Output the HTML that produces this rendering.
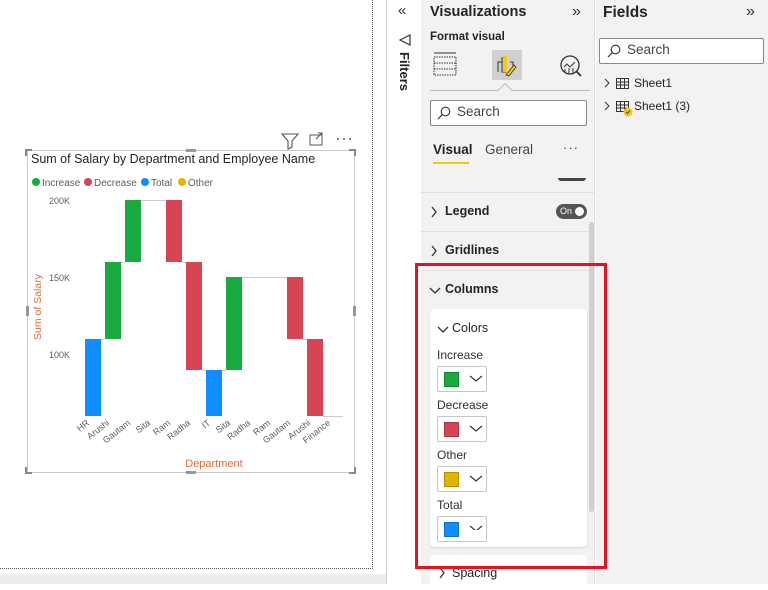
<!DOCTYPE html>
<html><head><meta charset="utf-8"><style>
*{margin:0;padding:0;box-sizing:border-box}
body{width:768px;height:584px;overflow:hidden;background:#fff;font-family:"Segoe UI","Liberation Sans",sans-serif;position:relative;color:#252423}
.abs{position:absolute}
.pane{background:#f3f2f1}
.sw{position:absolute;left:437px;width:50px;height:26px;background:#fff;border:1px solid #c8c6c4;border-radius:2px}
.sw i{position:absolute;left:6px;top:5px;width:15px;height:15px;border:1px solid rgba(0,0,0,.2)}
.lbl{position:absolute;left:437px;font-size:12px;color:#323130}
.sec{position:absolute;left:445px;font-size:12.5px;font-weight:600;color:#252423}
</style></head><body>
<div class="abs" style="left:0;top:0;width:373px;height:569px;border-right:1px dotted #555;border-bottom:1px dotted #555"></div>
<div class="abs" style="left:0;top:574px;width:386px;height:10px;background:#eeeded"></div>
<svg class="abs" style="left:0;top:0" width="386" height="574" font-family="Liberation Sans, sans-serif">
 <path d="M282 134h16l-6 7v6l-4 2v-8z" fill="none" stroke="#555" stroke-width="1.1"/>
 <rect x="310" y="135" width="12" height="10" fill="none" stroke="#555"/>
 <path d="M316 139l6-6M318 133h4v4" fill="none" stroke="#555"/>
 <circle cx="338" cy="139" r="1" fill="#555"/><circle cx="344" cy="139" r="1" fill="#555"/><circle cx="350" cy="139" r="1" fill="#555"/>
 <rect x="27.5" y="150.5" width="327" height="322" fill="none" stroke="#c8c8c8"/>
 <path d="M26 156v-6h6M349 150h6v6M26 467v6h6M349 473h6v-6" stroke="#888" stroke-width="2" fill="none"/>
 <rect x="186" y="149" width="10" height="3" fill="#999"/><rect x="186" y="471" width="10" height="3" fill="#999"/>
 <rect x="26" y="306" width="3" height="10" fill="#999"/><rect x="353" y="306" width="3" height="10" fill="#999"/>
 <text x="31" y="163" font-size="12.5" fill="#252423">Sum of Salary by Department and Employee Name</text>
 <circle cx="36" cy="182" r="4" fill="#1aab40"/><text x="42" y="186" font-size="10" fill="#605e5c">Increase</text>
 <circle cx="88" cy="182" r="4" fill="#d64554"/><text x="94" y="186" font-size="10" fill="#605e5c">Decrease</text>
 <circle cx="145" cy="182" r="4" fill="#118dff"/><text x="151" y="186" font-size="10" fill="#605e5c">Total</text>
 <circle cx="182" cy="182" r="4" fill="#e0b400"/><text x="188" y="186" font-size="10" fill="#605e5c">Other</text>
 <g font-size="9" fill="#605e5c" text-anchor="end"><text x="70" y="204">200K</text><text x="70" y="281">150K</text><text x="70" y="358">100K</text></g>
 <text transform="translate(41,307) rotate(-90)" text-anchor="middle" font-size="10.5" fill="#e66c37">Sum of Salary</text>
 <g stroke="#ccc" stroke-width="1"><path d="M141 200.5h25M242 277.5h45M323 416.5h20M101 339.5h4M121 262.5h4M182 262.5h4M202 370.5h4M222 370.5h4M303 339.5h4"/></g>
 <rect x="85" y="339" width="16" height="77" fill="#118dff"/>
 <rect x="105" y="262" width="16" height="77" fill="#1aab40"/>
 <rect x="125" y="200" width="16" height="62" fill="#1aab40"/>
 <rect x="166" y="200" width="16" height="62" fill="#d64554"/>
 <rect x="186" y="262" width="16" height="108" fill="#d64554"/>
 <rect x="206" y="370" width="16" height="46" fill="#118dff"/>
 <rect x="226" y="277" width="16" height="93" fill="#1aab40"/>
 <rect x="287" y="277" width="16" height="62" fill="#d64554"/>
 <rect x="307" y="339" width="16" height="77" fill="#d64554"/>
 <g font-size="9" fill="#605e5c" text-anchor="end">
  <text transform="translate(90,424) rotate(-38)">HR</text>
  <text transform="translate(110,424) rotate(-38)">Arushi</text>
  <text transform="translate(131,424) rotate(-38)">Gautam</text>
  <text transform="translate(151,424) rotate(-38)">Sita</text>
  <text transform="translate(171,424) rotate(-38)">Ram</text>
  <text transform="translate(191,424) rotate(-38)">Radha</text>
  <text transform="translate(211,424) rotate(-38)">IT</text>
  <text transform="translate(231,424) rotate(-38)">Sita</text>
  <text transform="translate(251,424) rotate(-38)">Radha</text>
  <text transform="translate(271,424) rotate(-38)">Ram</text>
  <text transform="translate(291,424) rotate(-38)">Gautam</text>
  <text transform="translate(311,424) rotate(-38)">Arushi</text>
  <text transform="translate(331,424) rotate(-38)">Finance</text>
 </g>
 <text x="214" y="467" text-anchor="middle" font-size="11" fill="#e66c37">Department</text>
</svg>
<div class="abs" style="left:386px;top:0;width:35px;height:584px;border-left:1px solid #d0d0d0;background:#fff"></div>
<div class="abs" style="left:398px;top:2px;font-size:15px;color:#333">«</div>
<svg class="abs" style="left:397px;top:34px" width="16" height="12"><path d="M3 6l10-5v10z" fill="none" stroke="#333" stroke-width="1.2"/></svg>
<div class="abs" style="left:396px;top:52px;font-size:13px;font-weight:700;transform-origin:0 0;transform:translate(16px,0) rotate(90deg);color:#252423">Filters</div>
<div class="abs pane" style="left:421px;top:0;width:174px;height:584px;border-right:1px solid #e1dfdd"></div>
<div class="abs" style="left:430px;top:4px;font-size:14.5px;font-weight:600">Visualizations</div>
<div class="abs" style="left:572px;top:3px;font-size:16px;color:#333">»</div>
<div class="abs" style="left:430px;top:31px;font-size:11.5px;font-weight:600">Format visual</div>
<svg class="abs" style="left:430px;top:48px" width="160" height="44">
 <path d="M4 5h22" stroke="#333"/><rect x="4" y="9" width="22" height="18" fill="none" stroke="#333" stroke-dasharray="1.5 1"/><path d="M4 15h22M4 21h22" stroke="#333" stroke-dasharray="1.5 1"/>
 <rect x="62" y="2" width="30" height="30" fill="#d2d0ce"/>
 <path d="M68 24v-10h4M72 10h4v14h-4zM80 14h3v5" fill="none" stroke="#333"/><rect x="73" y="8" width="4" height="16" fill="#f2c811"/>
 <path d="M76 27l8-10 2 2-7 9z" fill="#f2c811" stroke="#333" stroke-width=".8"/>
 <circle cx="140" cy="17" r="9" fill="none" stroke="#333" stroke-width="1.3"/><path d="M146 23l5 5" stroke="#333" stroke-width="1.8"/><path d="M134 19l3-3 3 3 5-5M135 21v4M139 20v6M143 20v6" stroke="#333" fill="none"/>
 <path d="M0 42.5h68l7-7 7 7h78" fill="none" stroke="#bbb"/>
</svg>
<div class="abs" style="left:430px;top:100px;width:157px;height:26px;background:#fff;border:1px solid #8a8886;border-radius:2px"></div>
<svg class="abs" style="left:437px;top:106px" width="14" height="14"><circle cx="8.5" cy="5.5" r="4.3" fill="none" stroke="#333" stroke-width="1.1"/><path d="M5.5 8.5l-4.5 4.5" stroke="#333" stroke-width="1.2"/></svg>
<div class="abs" style="left:457px;top:104px;font-size:13.5px;color:#444">Search</div>
<div class="abs" style="left:433px;top:142px;font-size:13.5px;font-weight:600">Visual</div>
<div class="abs" style="left:433px;top:162px;width:36px;height:2px;background:#f2c811"></div>
<div class="abs" style="left:485px;top:142px;font-size:13.5px;color:#444">General</div>
<div class="abs" style="left:563px;top:140px;font-size:13px;color:#444;letter-spacing:1px">···</div>
<div class="abs" style="left:558px;top:178px;width:28px;height:3px;background:#444;border-radius:0 0 3px 3px"></div>
<div class="abs" style="left:421px;top:192px;width:174px;height:1px;background:#e1dfdd"></div>
<div class="sec" style="top:204px">Legend</div>
<div class="abs" style="left:556px;top:204px;width:31px;height:15px;background:#555;border-radius:8px;color:#fff;font-size:9px;padding:2px 0 0 4px">On<span style="position:absolute;right:3px;top:3px;width:9px;height:9px;border-radius:50%;background:#fff"></span></div>
<div class="abs" style="left:421px;top:231px;width:170px;height:1px;background:#e1dfdd"></div>
<div class="sec" style="top:243px">Gridlines</div>
<div class="abs" style="left:421px;top:270px;width:170px;height:1px;background:#e1dfdd"></div>
<div class="abs" style="left:589px;top:222px;width:5px;height:290px;background:#d2d0ce;border-radius:3px"></div>
<div class="sec" style="top:282px">Columns</div>
<div class="abs" style="left:430px;top:309px;width:157px;height:238px;background:#fff;border-radius:4px;box-shadow:0 1px 2px rgba(0,0,0,.12)"></div>
<div class="sec" style="left:452px;top:321px;font-weight:400;color:#252423">Colors</div>
<div class="lbl" style="top:348px">Increase</div>
<div class="sw" style="top:366px"><i style="background:#1aab40"></i></div>
<div class="lbl" style="top:398px">Decrease</div>
<div class="sw" style="top:416px"><i style="background:#d64554"></i></div>
<div class="lbl" style="top:448px">Other</div>
<div class="sw" style="top:466px"><i style="background:#e0b400"></i></div>
<div class="lbl" style="top:498px">Total</div>
<div class="sw" style="top:516px"><i style="background:#118dff"></i></div>
<svg class="abs" style="left:468px;top:370px" width="16" height="160" fill="none" stroke="#333" stroke-width="1.2"><path d="M2 6l6 5 6-5M2 56l6 5 6-5M2 106l6 5 6-5M2 156l6 5 6-5"/></svg>
<div class="abs" style="left:430px;top:555px;width:157px;height:30px;background:#fff;border-radius:4px"></div>
<div class="sec" style="left:452px;top:566px;font-weight:400">Spacing</div>
<svg class="abs" style="left:428px;top:200px;z-index:3" width="30" height="390" fill="none" stroke="#333" stroke-width="1.3">
 <path d="M4 7l4 5-4 5M4 46l4 5-4 5M2 88l5 5 5-5M10 127l5 5 5-5M12 368l4 5-4 5"/>
</svg>
<div class="abs pane" style="left:596px;top:0;width:172px;height:584px"></div>
<div class="abs" style="left:603px;top:4px;font-size:15.5px;font-weight:600">Fields</div>
<div class="abs" style="left:746px;top:3px;font-size:16px;color:#333">»</div>
<div class="abs" style="left:599px;top:38px;width:165px;height:26px;background:#fff;border:1px solid #8a8886;border-radius:2px"></div>
<svg class="abs" style="left:607px;top:44px" width="14" height="14"><circle cx="8.5" cy="5.5" r="4.3" fill="none" stroke="#333" stroke-width="1.1"/><path d="M5.5 8.5l-4.5 4.5" stroke="#333" stroke-width="1.2"/></svg>
<div class="abs" style="left:627px;top:42px;font-size:13.5px;color:#444">Search</div>
<svg class="abs" style="left:604px;top:77px" width="30" height="42" fill="none" stroke="#333">
 <path d="M1 2l4 4-4 4M1 25l4 4-4 4" stroke-width="1"/>
 <rect x="12.5" y="1.5" width="12" height="10"/><path d="M12.5 5h12M12.5 8h12M16.5 1.5v10M20.5 1.5v10"/>
 <rect x="12.5" y="24.5" width="12" height="10"/><path d="M12.5 28h12M12.5 31h12M16.5 24.5v10M20.5 24.5v10"/>
 <circle cx="24" cy="35" r="4.5" fill="#f2c811" stroke="none"/><path d="M22 35l1.5 1.5 2.5-3" stroke-width=".9"/>
</svg>
<div class="abs" style="left:634px;top:76px;font-size:12px">Sheet1</div>
<div class="abs" style="left:634px;top:99px;font-size:12px">Sheet1 (3)</div>
<div class="abs" style="left:415px;top:263px;width:192px;height:306px;border:3px solid #e81123;z-index:5"></div>
</body></html>
